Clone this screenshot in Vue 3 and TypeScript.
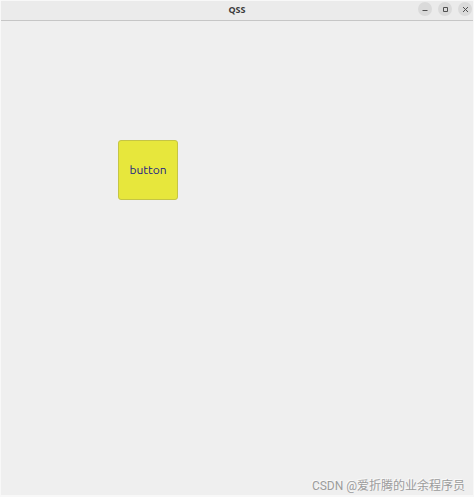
<script setup lang="ts">
import { ref } from 'vue'

const title = ref('QSS')
</script>

<template>
  <div class="window">
    <header class="titlebar">
      <h1 class="title">{{ title }}</h1>
      <div class="controls">
        <button class="control" type="button" aria-label="Minimize">
          <svg viewBox="0 0 14 14" aria-hidden="true"><path d="M4.5 8.5h5" /></svg>
        </button>
        <button class="control" type="button" aria-label="Maximize">
          <svg viewBox="0 0 14 14" aria-hidden="true"><path d="M5.5 5.5h4v4h-4z" /></svg>
        </button>
        <button class="control" type="button" aria-label="Close">
          <svg viewBox="0 0 14 14" aria-hidden="true"><path d="M5 5l5 5M10 5l-5 5" /></svg>
        </button>
      </div>
    </header>
    <main class="canvas">
      <button class="push" type="button">button</button>
    </main>
    <footer class="credit">CSDN @爱折腾的业余程序员</footer>
  </div>
</template>

<style>
body {
  margin: 0;
  background: #fafafa;
}
</style>

<style scoped>
.window {
  box-sizing: border-box;
  display: flex;
  flex-direction: column;
  min-height: 100vh;
  border: 1px solid #f8f8f8;
  border-bottom-width: 2px;
  border-radius: 4px 4px 0 0;
  background: #efefef;
  font-family: "Noto Sans", "Open Sans", sans-serif;
}

.titlebar {
  box-sizing: border-box;
  display: grid;
  grid-template-columns: 1fr auto 1fr;
  align-items: start;
  height: 20px;
  border-bottom: 1px solid #c6c6c6;
  background: #ebebeb;
}

.title {
  grid-column: 2;
  margin: 0;
  color: #3b3b3b;
  font-size: 9px;
  line-height: 18px;
  font-weight: 700;
}

.controls {
  display: flex;
  justify-content: flex-end;
  gap: 6px;
  padding: 1px 1px 0 0;
}

.control {
  width: 14px;
  height: 14px;
  padding: 0;
  border: 0;
  border-radius: 50%;
  background: #dadada;
}

.control svg {
  display: block;
  width: 14px;
  height: 14px;
  fill: none;
  stroke: #505050;
  stroke-width: 1;
}

.canvas {
  flex: 1;
  padding: 119px 0 0 117px;
}

.push {
  box-sizing: border-box;
  width: 60px;
  height: 60px;
  padding: 0 0 2px;
  border: 1px solid #c5c545;
  border-radius: 3px;
  background: #e7e73c;
  color: #211a86;
  font-family: Ubuntu, "Noto Sans", sans-serif;
  font-size: 12px;
}

.credit {
  padding: 0 8px 0 0;
  color: #9c9c9c;
  font-family: Roboto, "Noto Sans CJK SC", sans-serif;
  font-size: 12px;
  line-height: 18px;
  text-align: right;
  text-shadow: -1px -1px 0 #fafafa;
}
</style>
